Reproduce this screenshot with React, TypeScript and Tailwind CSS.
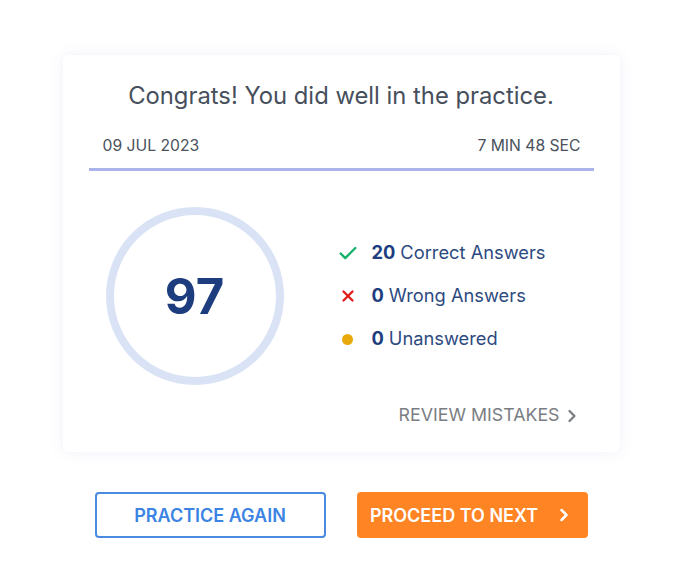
import { ChevronRight, Check, X } from "lucide-react";

type Stat = {
  count: number;
  label: string;
  kind: "correct" | "wrong" | "skip";
};

const stats: Stat[] = [
  { count: 20, label: "Correct Answers", kind: "correct" },
  { count: 0, label: "Wrong Answers", kind: "wrong" },
  { count: 0, label: "Unanswered", kind: "skip" },
];

function StatIcon({ kind }: { kind: Stat["kind"] }) {
  if (kind === "correct") return <Check size={23} strokeWidth={2.6} className="text-[#16b36a]" />;
  if (kind === "wrong") return <X size={18} strokeWidth={3.2} className="text-[#e0201c]" />;
  return <span className="block w-[11px] h-[11px] rounded-full bg-[#e8a90c]" />;
}

export default function App() {
  return (
    <div className="w-[682px] h-[566px] bg-white flex flex-col items-center font-['Inter',sans-serif]">
      <div className="mt-[55px] w-[557px] h-[397px] bg-white rounded-md shadow-[0_0_14px_rgba(120,130,200,0.12)] flex flex-col">
        <h1 className="mt-[25px] text-center text-[23.8px] leading-[32px] text-[#474f5c]">
          Congrats! You did well in the practice.
        </h1>
        <div className="mx-[26px] mt-[23px] flex justify-between pl-[14px] pr-[13px] text-[15.7px] text-[#4a515c] leading-[22px]">
          <span>09 JUL 2023</span>
          <span>7 MIN 48 SEC</span>
        </div>
        <div className="mx-[26px] mt-[11px] h-[3px] bg-[#aab4ea]" />

        <div className="flex items-center mt-[36px] pl-[43px]">
          <div className="w-[178px] h-[178px] rounded-full border-[8px] border-[#d9e3f5] flex items-center justify-center">
            <span className="text-[49px] font-bold text-[#1d3d7e] leading-none">97</span>
          </div>
          <div className="ml-[53px] flex flex-col gap-[18px]">
            {stats.map((s) => (
              <div key={s.label} className="flex items-center h-[25px] text-[18.3px] text-[#2d4a7f]">
                <span className="w-[22px] flex justify-center">
                  <StatIcon kind={s.kind} />
                </span>
                <span className="ml-[13px] font-bold text-[#1d3d7e]">{s.count}</span>
                <span className="ml-[5px]">{s.label}</span>
              </div>
            ))}
          </div>
        </div>

        <div className="mt-auto mb-[23px] mr-[38px] flex justify-end items-center text-[17.8px] text-[#7a7d82]">
          <span>REVIEW MISTAKES</span>
          <ChevronRight size={20} strokeWidth={2.75} className="ml-[2px]" />
        </div>
      </div>

      <div className="mt-[40px] flex gap-[31px]">
        <button className="w-[231px] h-[46px] rounded-[4px] border-2 border-[#4a8ae0] text-[#3b84e3] font-semibold text-[18px]">
          PRACTICE AGAIN
        </button>
        <button className="w-[231px] h-[46px] rounded-[4px] bg-[#ff8424] text-white font-semibold text-[18px] flex items-center justify-center gap-[16px]">
          PROCEED TO NEXT
          <ChevronRight size={20} strokeWidth={3} />
        </button>
      </div>
    </div>
  );
}
